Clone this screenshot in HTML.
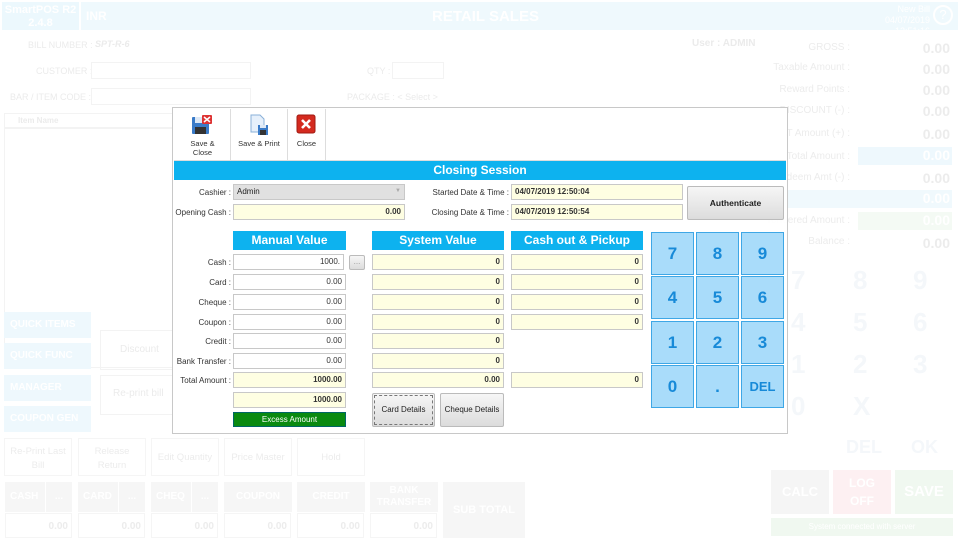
<!DOCTYPE html>
<html><head><meta charset="utf-8"><style>
*{margin:0;padding:0;box-sizing:border-box}
body{width:960px;height:540px;overflow:hidden;background:#fff;font-family:"Liberation Sans",sans-serif;position:relative}
.a{position:absolute}
.gt{position:absolute;color:#ebebeb;font-size:12px}
.bx{position:absolute;border:1px solid #f3f3f3}
.lb{position:absolute;font-size:8px;color:#333;text-align:right}
.f{position:absolute;height:16px;border:1px solid #c8c8c8;font-size:8px;text-align:right;padding:2px 3px;color:#333;background:#fff}
.y{background:#fefee2}
.b{font-weight:bold}
.hd{position:absolute;height:19px;background:#0db2ef;color:#fff;font-weight:bold;font-size:12px;text-align:center;line-height:19px}
.k{position:absolute;width:43px;height:43px;background:#a9dcfa;border:1px solid #3ea7e6;color:#178ad8;font-weight:bold;font-size:17px;text-align:center;line-height:42px}
.btn{position:absolute;border:1px solid #bbb;background:linear-gradient(#f6f6f6,#dcdcdc);font-size:8px;color:#222;text-align:center;border-radius:2px}
.p{background:#f6f6f6}
.pv{position:absolute;top:31px;width:67px;height:25px;border:1px solid #f5f5f5;color:#ececec;text-align:right;padding:7px 3px 0 0}
.q{position:absolute;left:4px;width:87px;height:26px;background:#eef8fd;color:#fff;font-weight:bold;font-size:10px;line-height:26px;padding-left:6px}
.rl{position:absolute;left:760px;width:90px;text-align:right;font-size:10px;color:#ececec}
.rv{position:absolute;right:10px;font-size:14px;font-weight:bold;color:#ececec}
</style></head><body>
<div class="a" style="left:2px;top:2px;width:77px;height:28px;background:#ecf8fd;color:#fff;font-size:11px;font-weight:bold;text-align:center;line-height:13px;padding-top:2px">SmartPOS R2<br>2.4.8</div>
<div class="a" style="left:81px;top:2px;width:877px;height:28px;background:#eff9fd"></div>
<div class="a" style="left:86px;top:9px;color:#fff;font-size:12px;font-weight:bold">INR</div>
<div class="a" style="left:432px;top:8px;color:#fff;font-size:15px;font-weight:bold">RETAIL SALES</div>
<div class="a" style="left:850px;top:4px;color:#fff;font-size:9px;text-align:right;width:80px;line-height:11px">New Bill<br>04/07/2019 12:51:16</div>
<div class="a" style="left:933px;top:5px;width:20px;height:20px;border:2px solid #fff;border-radius:50%;color:#fff;font-size:13px;text-align:center;line-height:16px">?</div>
<div class="gt" style="left:28px;top:40px;font-size:9px">BILL NUMBER :</div>
<div class="gt" style="left:95px;top:39px;font-size:9px;font-weight:bold;font-style:italic">SPT-R-6</div>
<div class="gt" style="left:36px;top:66px;font-size:9px">CUSTOMER :</div>
<div class="bx" style="left:91px;top:62px;width:160px;height:17px"></div>
<div class="gt" style="left:10px;top:92px;font-size:9px">BAR / ITEM CODE :</div>
<div class="bx" style="left:91px;top:88px;width:160px;height:17px"></div>
<div class="gt" style="left:367px;top:66px;font-size:9px">QTY :</div>
<div class="bx" style="left:392px;top:62px;width:52px;height:17px"></div>
<div class="gt" style="left:347px;top:92px;font-size:9px">PACKAGE : &lt; Select &gt;</div>
<div class="gt" style="left:692px;top:38px;font-size:10px;font-weight:bold">User : ADMIN</div>
<div class="bx" style="left:4px;top:113px;width:635px;height:15px"></div>
<div class="gt" style="left:18px;top:116px;font-size:8px;font-weight:bold">Item Name</div>
<div class="bx" style="left:4px;top:128px;width:635px;height:240px"></div>
<div class="rl" style="top:42px">GROSS :</div><div class="rv" style="top:40px">0.00</div>
<div class="rl" style="top:62px">Taxable Amount :</div><div class="rv" style="top:61px">0.00</div>
<div class="rl" style="top:84px">Reward Points :</div><div class="rv" style="top:82px">0.00</div>
<div class="rl" style="top:105px">DISCOUNT (-) :</div><div class="rv" style="top:103px">0.00</div>
<div class="rl" style="top:128px">VAT Amount (+) :</div><div class="rv" style="top:126px">0.00</div>
<div class="rl" style="top:151px">Total Amount :</div>
<div class="a" style="left:858px;top:147px;width:94px;height:18px;background:#eef8fd;color:#fff;font-weight:bold;font-size:14px;text-align:right;padding-right:2px">0.00</div>
<div class="rl" style="top:172px">Redeem Amt (-) :</div><div class="rv" style="top:170px">0.00</div>
<div class="a" style="left:772px;top:190px;width:180px;height:18px;background:#f0f9fd;color:#fff;font-weight:bold;font-size:14px;text-align:right;padding-right:2px">0.00</div>
<div class="rl" style="top:215px">Tendered Amount :</div>
<div class="a" style="left:858px;top:212px;width:94px;height:18px;background:#f4faf4;color:#fff;font-weight:bold;font-size:14px;text-align:right;padding-right:2px">0.00</div>
<div class="rl" style="top:236px">Balance :</div><div class="rv" style="top:235px">0.00</div>
<div class="a" style="left:771px;top:255px;width:182px;height:260px;color:#f4f7fa;font-size:26px;font-weight:bold">
<div class="a" style="left:20px;top:10px">7</div><div class="a" style="left:82px;top:10px">8</div><div class="a" style="left:142px;top:10px">9</div>
<div class="a" style="left:20px;top:52px">4</div><div class="a" style="left:82px;top:52px">5</div><div class="a" style="left:142px;top:52px">6</div>
<div class="a" style="left:20px;top:94px">1</div><div class="a" style="left:82px;top:94px">2</div><div class="a" style="left:142px;top:94px">3</div>
<div class="a" style="left:20px;top:136px">0</div><div class="a" style="left:82px;top:136px">X</div>
<div class="a" style="left:75px;top:182px;font-size:18px">DEL</div><div class="a" style="left:140px;top:182px;font-size:18px">OK</div>
</div>
<div class="a" style="left:771px;top:470px;width:58px;height:44px;background:#f5f5f5;color:#fff;font-weight:bold;font-size:13px;text-align:center;line-height:44px">CALC</div>
<div class="a" style="left:833px;top:470px;width:58px;height:44px;background:#fdf0f2;color:#fff;font-weight:bold;font-size:12px;text-align:center;line-height:18px;padding-top:4px">LOG<br>OFF</div>
<div class="a" style="left:895px;top:470px;width:58px;height:44px;background:#f0f8f0;color:#fff;font-weight:bold;font-size:15px;text-align:center;line-height:44px">SAVE</div>
<div class="a" style="left:771px;top:518px;width:182px;height:18px;background:#f0f8f0;color:#fff;font-size:8px;text-align:center;line-height:18px">System connected with server</div>
<div class="q" style="top:312px">QUICK ITEMS</div>
<div class="q" style="top:343px">QUICK FUNC</div>
<div class="q" style="top:375px">MANAGER</div>
<div class="q" style="top:406px">COUPON GEN</div>
<div class="bx" style="left:100px;top:330px;width:86px;height:40px"></div><div class="gt" style="left:120px;top:344px;font-size:10px">Discount</div>
<div class="bx" style="left:100px;top:375px;width:86px;height:40px"></div><div class="gt" style="left:113px;top:388px;font-size:10px">Re-print bill</div>
<div class="a" style="left:4px;top:438px;width:68px;height:38px;border:1px solid #f5f5f5;color:#ececec;font-size:9.5px;text-align:center;padding-top:6px;line-height:14px">Re-Print Last<br>Bill</div>
<div class="a" style="left:78px;top:438px;width:68px;height:38px;border:1px solid #f5f5f5;color:#ececec;font-size:9.5px;text-align:center;padding-top:6px;line-height:14px">Release<br>Return</div>
<div class="a" style="left:151px;top:438px;width:68px;height:38px;border:1px solid #f5f5f5;color:#ececec;font-size:9.5px;text-align:center;line-height:38px">Edit Quantity</div>
<div class="a" style="left:224px;top:438px;width:68px;height:38px;border:1px solid #f5f5f5;color:#ececec;font-size:9.5px;text-align:center;line-height:38px">Price Master</div>
<div class="a" style="left:297px;top:438px;width:68px;height:38px;border:1px solid #f5f5f5;color:#ececec;font-size:9.5px;text-align:center;line-height:38px">Hold</div>
<div class="a" style="left:0;top:482px;width:530px;height:58px;font-weight:bold;color:#fff;font-size:10px">
<div class="a p" style="left:5px;top:0;width:40px;height:30px;line-height:30px;padding-left:5px">CASH</div><div class="a p" style="left:46px;top:0;width:26px;height:30px;text-align:center;line-height:30px">...</div>
<div class="a p" style="left:78px;top:0;width:40px;height:30px;line-height:30px;padding-left:5px">CARD</div><div class="a p" style="left:119px;top:0;width:26px;height:30px;text-align:center;line-height:30px">...</div>
<div class="a p" style="left:151px;top:0;width:40px;height:30px;line-height:30px;padding-left:5px">CHEQ</div><div class="a p" style="left:192px;top:0;width:26px;height:30px;text-align:center;line-height:30px">...</div>
<div class="a p" style="left:224px;top:0;width:68px;height:30px;text-align:center;line-height:30px">COUPON</div>
<div class="a p" style="left:297px;top:0;width:68px;height:30px;text-align:center;line-height:30px">CREDIT</div>
<div class="a p" style="left:370px;top:0;width:68px;height:30px;text-align:center;line-height:12px;padding-top:3px">BANK<br>TRANSFER</div>
<div class="a p" style="left:443px;top:0;width:82px;height:56px;text-align:center;line-height:56px;font-size:11px">SUB TOTAL</div>
<div class="pv" style="left:5px">0.00</div><div class="pv" style="left:78px">0.00</div><div class="pv" style="left:151px">0.00</div>
<div class="pv" style="left:224px">0.00</div><div class="pv" style="left:297px">0.00</div><div class="pv" style="left:370px">0.00</div>
</div>

<div class="a" style="left:172px;top:107px;width:616px;height:327px;border:1px solid #c8c8c8;background:rgba(255,255,255,0.93)"></div>
<div class="a" style="left:174px;top:109px;width:612px;height:52px;background:#fff;border-bottom:1px solid #ddd"></div>
<div class="a" style="left:230px;top:109px;width:1px;height:51px;background:#ddd"></div>
<div class="a" style="left:287px;top:109px;width:1px;height:51px;background:#ddd"></div>
<div class="a" style="left:325px;top:109px;width:1px;height:51px;background:#ddd"></div>
<svg class="a" style="left:191px;top:114px" width="22" height="22" viewBox="0 0 22 22"><rect x="1" y="3" width="17" height="17" rx="1" fill="#3a7bc8"/><rect x="4" y="3" width="10" height="6" fill="#dde8f5"/><rect x="4" y="13" width="11" height="7" fill="#333"/><rect x="11" y="1" width="10" height="9" rx="1" fill="#d33"/><path d="M13 3l6 5M19 3l-6 5" stroke="#fff" stroke-width="1.5"/></svg>
<div class="a" style="left:176px;top:139px;width:53px;font-size:7.5px;text-align:center;color:#333;line-height:9px">Save &amp;<br>Close</div>
<svg class="a" style="left:248px;top:114px" width="22" height="22" viewBox="0 0 22 22"><path d="M3 1h9l4 4v13H3z" fill="#e6f0fb" stroke="#8ab0d8"/><rect x="10" y="11" width="10" height="10" fill="#3a7bc8"/><rect x="12" y="11" width="6" height="3" fill="#dde8f5"/><rect x="12" y="16" width="6" height="5" fill="#333"/></svg>
<div class="a" style="left:231px;top:139px;width:56px;font-size:7.5px;text-align:center;color:#333">Save &amp; Print</div>
<svg class="a" style="left:296px;top:114px" width="20" height="20" viewBox="0 0 20 20"><rect x="1" y="1" width="18" height="18" rx="2" fill="#d42a1f" stroke="#a01a12"/><path d="M6 6l8 8M14 6l-8 8" stroke="#fff" stroke-width="2.6"/></svg>
<div class="a" style="left:288px;top:139px;width:37px;font-size:7.5px;text-align:center;color:#333">Close</div>

<div class="hd" style="left:174px;top:161px;width:612px">Closing Session</div>
<div class="lb" style="left:175px;top:188px;width:56px">Cashier :</div>
<div class="f" style="left:233px;top:184px;width:172px;background:#e0e0e0;text-align:left;color:#222">Admin<span style="position:absolute;right:3px;color:#aaa;font-size:6px;top:3px">▼</span></div>
<div class="lb" style="left:172px;top:208px;width:59px">Opening Cash :</div>
<div class="f y b" style="left:233px;top:204px;width:172px">0.00</div>
<div class="lb" style="left:410px;top:188px;width:99px">Started Date &amp; Time :</div>
<div class="f y b" style="left:511px;top:184px;width:172px;text-align:left">04/07/2019 12:50:04</div>
<div class="lb" style="left:410px;top:208px;width:99px">Closing Date &amp; Time :</div>
<div class="f y b" style="left:511px;top:204px;width:172px;text-align:left">04/07/2019 12:50:54</div>
<div class="btn b" style="left:687px;top:186px;width:97px;height:34px;line-height:32px;font-size:8.5px">Authenticate</div>

<div class="hd" style="left:233px;top:231px;width:113px">Manual Value</div>
<div class="hd" style="left:372px;top:231px;width:132px">System Value</div>
<div class="hd" style="left:511px;top:231px;width:132px">Cash out &amp; Pickup</div>

<div class="lb" style="left:175px;top:258px;width:56px">Cash :</div>
<div class="f" style="left:233px;top:254px;width:111px">1000.</div>
<div class="btn" style="left:349px;top:255px;width:16px;height:15px;line-height:12px;color:#999">...</div>
<div class="lb" style="left:175px;top:278px;width:56px">Card :</div><div class="f" style="left:233px;top:274px;width:113px">0.00</div>
<div class="lb" style="left:175px;top:298px;width:56px">Cheque :</div><div class="f" style="left:233px;top:294px;width:113px">0.00</div>
<div class="lb" style="left:175px;top:318px;width:56px">Coupon :</div><div class="f" style="left:233px;top:314px;width:113px">0.00</div>
<div class="lb" style="left:175px;top:337px;width:56px">Credit :</div><div class="f" style="left:233px;top:333px;width:113px">0.00</div>
<div class="lb" style="left:172px;top:357px;width:59px">Bank Transfer :</div><div class="f" style="left:233px;top:353px;width:113px">0.00</div>
<div class="lb" style="left:172px;top:376px;width:59px">Total Amount :</div><div class="f y b" style="left:233px;top:372px;width:113px">1000.00</div>
<div class="f y b" style="left:233px;top:392px;width:113px">1000.00</div>
<div class="a" style="left:233px;top:412px;width:113px;height:15px;background:#0a8a10;border:1px solid #066;color:#fff;font-size:8px;text-align:center;line-height:13px">Excess Amount</div>

<div class="f y b" style="left:372px;top:254px;width:132px">0</div>
<div class="f y b" style="left:372px;top:274px;width:132px">0</div>
<div class="f y b" style="left:372px;top:294px;width:132px">0</div>
<div class="f y b" style="left:372px;top:314px;width:132px">0</div>
<div class="f y b" style="left:372px;top:333px;width:132px">0</div>
<div class="f y b" style="left:372px;top:353px;width:132px">0</div>
<div class="f y b" style="left:372px;top:372px;width:132px">0.00</div>
<div class="btn" style="left:372px;top:393px;width:63px;height:34px;line-height:32px;outline:1px dashed #777;outline-offset:-3px">Card Details</div>
<div class="btn" style="left:440px;top:393px;width:64px;height:34px;line-height:32px">Cheque Details</div>

<div class="f y b" style="left:511px;top:254px;width:132px">0</div>
<div class="f y b" style="left:511px;top:274px;width:132px">0</div>
<div class="f y b" style="left:511px;top:294px;width:132px">0</div>
<div class="f y b" style="left:511px;top:314px;width:132px">0</div>
<div class="f y b" style="left:511px;top:372px;width:132px">0</div>

<div class="k" style="left:651px;top:232px">7</div><div class="k" style="left:696px;top:232px">8</div><div class="k" style="left:741px;top:232px">9</div>
<div class="k" style="left:651px;top:276px">4</div><div class="k" style="left:696px;top:276px">5</div><div class="k" style="left:741px;top:276px">6</div>
<div class="k" style="left:651px;top:321px">1</div><div class="k" style="left:696px;top:321px">2</div><div class="k" style="left:741px;top:321px">3</div>
<div class="k" style="left:651px;top:365px">0</div><div class="k" style="left:696px;top:365px">.</div><div class="k" style="left:741px;top:365px;font-size:13px">DEL</div>
</body></html>
